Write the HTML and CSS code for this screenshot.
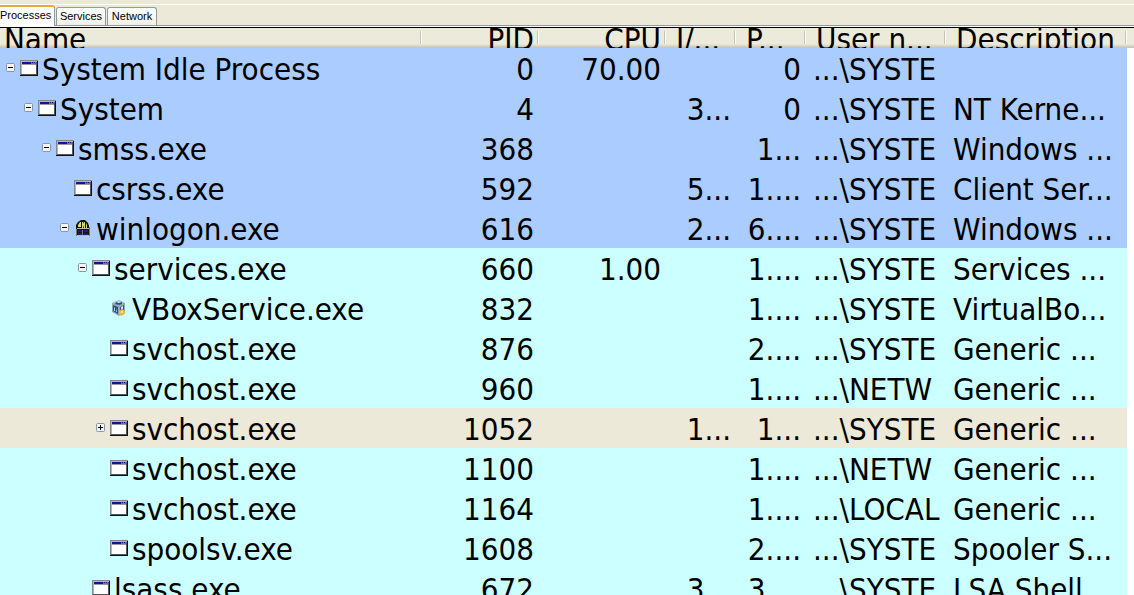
FILE: index.html
```
<!DOCTYPE html>
<html lang="en">
<head>
  <meta charset="UTF-8">
  <title>Processes</title>
  <link rel="stylesheet" href="styles.css">
</head>
<body>
<svg class="sprites" aria-hidden="true">
  <symbol id="icon-window" viewBox="0 0 18 16">
    <path fill="#85858c" d="M0 0h18v16H0z"/>
    <path fill="#b4b4bc" d="M1 1h16v14H1z"/>
    <path fill="#fff" d="M2 5h14v9H2z"/>
    <path fill="#15159a" d="M2 2h9v2H2z"/>
    <path fill="#6a6ac0" d="M11 2h5v2h-5z"/>
    <path fill="#15158a" d="M12 2h1v1h-1zM14 2h1v1h-1z"/>
    <path fill="#9a9aa4" d="M2 4h14v1H2z"/>
    <path fill="#111" d="M0 15h18v1H0zM17 1h1v15h-1z"/>
    <path fill="#55555c" d="M1 14h16v1H1zM16 2h1v12h-1z"/>
  </symbol>
  <symbol id="icon-logon" viewBox="0 0 18 18">
    <path fill="#111" d="M2 17V6l2-3 3-2h4l3 3 1 3v10z"/>
    <path fill="#e0d878" d="M4 6l2-3h1v5H4zM8 3h1l1 2V3h1v6h-1L9 6v3H8zM12 4l1 2v3h-1z"/>
    <path fill="#b9b9c6" d="M3 9h12v1H3zM3 16h12v1H3z"/>
    <path fill="#181894" d="M4 11h4v2H4zM10 11h4v2h-4zM4 14h4v2H4zM10 14h4v2h-4z"/>
    <path fill="#77776a" d="M2 10h1v7H2zM15 8h1v9h-1zM8 11h1v5H8z"/>
  </symbol>
  <symbol id="icon-vbox" viewBox="0 0 18 18">
    <path fill="#8fa9bc" d="M2 4l7-3 6 3v9l-6 4-7-4z"/>
    <path fill="#d8e8f0" d="M4 4l5-2 4 2-4 2z"/>
    <path fill="#2c4f78" d="M6 3l3 1 3-1v2L9 6 5 5zM3 6l5 2v7l-5-3z"/>
    <path fill="#b4d2e4" d="M4 8l1 1v3H4zM6 9l1 4H6z"/>
    <path fill="#315a80" d="M10 8l4-2v5l-4 2z"/>
    <path fill="#d4e4ec" d="M11 8l2-1v3l-2 1z"/>
    <path fill="#e9b94e" d="M9 12l3-2 3 2v3l-4 2-2-2z"/>
    <path fill="#f8e4a0" d="M11 12h2v2h-2z"/>
  </symbol>
  <symbol id="icon-minus" viewBox="0 0 9 9">
    <rect x=".5" y=".5" width="8" height="8" rx="1" fill="#f4f3ee" stroke="#8297ae"/>
    <path fill="#000" d="M2 4h5v1H2z"/>
  </symbol>
  <symbol id="icon-plus" viewBox="0 0 9 9">
    <rect x=".5" y=".5" width="8" height="8" rx="1" fill="#f4f3ee" stroke="#8297ae"/>
    <path fill="#000" d="M2 4h5v1H2zM4 2h1v5H4z"/>
  </symbol>
</svg>

<div class="window">
  <div class="toolbar"></div>
  <div class="tabs" role="tablist">
    <button class="tab tab--active" role="tab" aria-selected="true">Processes</button>
    <button class="tab" role="tab" aria-selected="false">Services</button>
    <button class="tab" role="tab" aria-selected="false">Network</button>
  </div>

  <div class="list">
    <table class="processes">
      <colgroup>
        <col>
        <col class="col-pid">
        <col class="col-cpu">
        <col class="col-io">
        <col class="col-private">
        <col class="col-user">
        <col class="col-description">
        <col class="col-rest">
      </colgroup>
      <thead>
        <tr>
          <th class="name"><div>Name</div></th>
          <th class="num"><div>PID</div></th>
          <th class="num"><div>CPU</div></th>
          <th><div>I/...</div></th>
          <th><div>P...</div></th>
          <th><div>User n...</div></th>
          <th><div>Description</div></th>
          <th class="rest"></th>
        </tr>
      </thead>
      <tbody>
        <tr class="own">
          <td><div class="node level-0"><button class="toggle" aria-label="Collapse"><svg><use href="#icon-minus"/></svg></button><svg class="icon"><use href="#icon-window"/></svg>System Idle Process</div></td>
          <td class="num">0</td><td class="num">70.00</td><td class="num"></td><td class="num">0</td><td><div class="clip">...\SYSTE</div></td><td></td><td class="rest"></td>
        </tr>
        <tr class="own">
          <td><div class="node level-1"><button class="toggle" aria-label="Collapse"><svg><use href="#icon-minus"/></svg></button><svg class="icon"><use href="#icon-window"/></svg>System</div></td>
          <td class="num">4</td><td class="num"></td><td class="num">3...</td><td class="num">0</td><td><div class="clip">...\SYSTE</div></td><td>NT Kerne...</td><td class="rest"></td>
        </tr>
        <tr class="own">
          <td><div class="node level-2"><button class="toggle" aria-label="Collapse"><svg><use href="#icon-minus"/></svg></button><svg class="icon"><use href="#icon-window"/></svg>smss.exe</div></td>
          <td class="num">368</td><td class="num"></td><td class="num"></td><td class="num">1...</td><td><div class="clip">...\SYSTE</div></td><td>Windows ...</td><td class="rest"></td>
        </tr>
        <tr class="own">
          <td><div class="node level-3"><span class="toggle"></span><svg class="icon"><use href="#icon-window"/></svg>csrss.exe</div></td>
          <td class="num">592</td><td class="num"></td><td class="num">5...</td><td class="num">1....</td><td><div class="clip">...\SYSTE</div></td><td>Client Ser...</td><td class="rest"></td>
        </tr>
        <tr class="own">
          <td><div class="node level-3"><button class="toggle" aria-label="Collapse"><svg><use href="#icon-minus"/></svg></button><svg class="icon icon--tall"><use href="#icon-logon"/></svg>winlogon.exe</div></td>
          <td class="num">616</td><td class="num"></td><td class="num">2...</td><td class="num">6....</td><td><div class="clip">...\SYSTE</div></td><td>Windows ...</td><td class="rest"></td>
        </tr>
        <tr class="service">
          <td><div class="node level-4"><button class="toggle" aria-label="Collapse"><svg><use href="#icon-minus"/></svg></button><svg class="icon"><use href="#icon-window"/></svg>services.exe</div></td>
          <td class="num">660</td><td class="num">1.00</td><td class="num"></td><td class="num">1....</td><td><div class="clip">...\SYSTE</div></td><td>Services ...</td><td class="rest"></td>
        </tr>
        <tr class="service">
          <td><div class="node level-5"><span class="toggle"></span><svg class="icon icon--tall"><use href="#icon-vbox"/></svg>VBoxService.exe</div></td>
          <td class="num">832</td><td class="num"></td><td class="num"></td><td class="num">1....</td><td><div class="clip">...\SYSTE</div></td><td>VirtualBo...</td><td class="rest"></td>
        </tr>
        <tr class="service">
          <td><div class="node level-5"><span class="toggle"></span><svg class="icon"><use href="#icon-window"/></svg>svchost.exe</div></td>
          <td class="num">876</td><td class="num"></td><td class="num"></td><td class="num">2....</td><td><div class="clip">...\SYSTE</div></td><td>Generic ...</td><td class="rest"></td>
        </tr>
        <tr class="service">
          <td><div class="node level-5"><span class="toggle"></span><svg class="icon"><use href="#icon-window"/></svg>svchost.exe</div></td>
          <td class="num">960</td><td class="num"></td><td class="num"></td><td class="num">1....</td><td><div class="clip">...\NETW</div></td><td>Generic ...</td><td class="rest"></td>
        </tr>
        <tr class="selected">
          <td><div class="node level-5"><button class="toggle" aria-label="Expand"><svg><use href="#icon-plus"/></svg></button><svg class="icon"><use href="#icon-window"/></svg>svchost.exe</div></td>
          <td class="num">1052</td><td class="num"></td><td class="num">1...</td><td class="num">1...</td><td><div class="clip">...\SYSTE</div></td><td>Generic ...</td><td class="rest"></td>
        </tr>
        <tr class="service">
          <td><div class="node level-5"><span class="toggle"></span><svg class="icon"><use href="#icon-window"/></svg>svchost.exe</div></td>
          <td class="num">1100</td><td class="num"></td><td class="num"></td><td class="num">1....</td><td><div class="clip">...\NETW</div></td><td>Generic ...</td><td class="rest"></td>
        </tr>
        <tr class="service">
          <td><div class="node level-5"><span class="toggle"></span><svg class="icon"><use href="#icon-window"/></svg>svchost.exe</div></td>
          <td class="num">1164</td><td class="num"></td><td class="num"></td><td class="num">1....</td><td><div class="clip">...\LOCAL</div></td><td>Generic ...</td><td class="rest"></td>
        </tr>
        <tr class="service">
          <td><div class="node level-5"><span class="toggle"></span><svg class="icon"><use href="#icon-window"/></svg>spoolsv.exe</div></td>
          <td class="num">1608</td><td class="num"></td><td class="num"></td><td class="num">2....</td><td><div class="clip">...\SYSTE</div></td><td>Spooler S...</td><td class="rest"></td>
        </tr>
        <tr class="service">
          <td><div class="node level-4"><span class="toggle"></span><svg class="icon"><use href="#icon-window"/></svg>lsass.exe</div></td>
          <td class="num">672</td><td class="num"></td><td class="num">3...</td><td class="num">3....</td><td><div class="clip">...\SYSTE</div></td><td>LSA Shell...</td><td class="rest"></td>
        </tr>
      </tbody>
    </table>
  </div>
</div>
</body>
</html>
```
FILE: styles.css
```
body {
  margin: 0;
  background: white;
  color: black;
  font-family: "DejaVu Sans Condensed", "DejaVu Sans", sans-serif;
  overflow: hidden;
}
.sprites {
  display: none;
}
.window {
  display: flex;
  flex-direction: column;
  height: 100vh;
  overflow: hidden;
}
.toolbar {
  flex: none;
  height: 4px;
  background: #ece9d8;
  border-bottom: 1px solid white;
}

/* tabs */
.tabs {
  flex: none;
  display: flex;
  align-items: flex-end;
  gap: 1px;
  height: 20px;
  background: #ece9d8;
  border-bottom: 1px solid #919b9c;
}
.tab {
  box-sizing: border-box;
  width: 50px;
  height: 18px;
  padding: 0;
  border: 1px solid #919b9c;
  border-bottom: none;
  border-radius: 3px 3px 0 0;
  background: linear-gradient(white, #f1f0e8);
  color: black;
  font-family: "Liberation Sans", Arial, sans-serif;
  font-size: 11px;
  line-height: 17px;
}
.tab--active {
  width: 55px;
  height: 21px;
  margin-bottom: -1px;
  padding: 0 6px 2px 0;
  border-top: 2px solid #f0a63a;
  border-left: none;
  border-radius: 0 3px 0 0;
  background: white;
}

/* process list */
.list {
  flex: 1;
  min-height: 0;
  margin-top: 1px;
  border-top: 1px solid black;
  overflow: hidden;
}
.processes {
  width: 100%;
  table-layout: fixed;
  border-collapse: collapse;
  font-size: 31px;
  white-space: nowrap;
}
.col-pid {
  width: 117px;
}
.col-cpu {
  width: 127px;
}
.col-io,
.col-private {
  width: 70px;
}
.col-user {
  width: 140px;
}
.col-description {
  width: 181px;
}
.col-rest {
  width: 7px;
}
.processes th {
  height: 20px;
  padding: 0;
  background:
    linear-gradient(#c5c2b4, #c5c2b4) right 1px top 3px / 1px 13px no-repeat,
    linear-gradient(white, white) right 0 top 3px / 1px 13px no-repeat,
    linear-gradient(#ebeadb 16px, #d8d4c4 18px, #c4c3bb 20px);
  font-weight: normal;
  text-align: left;
  vertical-align: top;
}
.processes th.rest {
  background: linear-gradient(#ebeadb 16px, #d8d4c4 18px, #c4c3bb 20px);
}
.processes th div {
  height: 20px;
  padding-left: 10px;
  line-height: 22px;
  overflow: hidden;
}
.processes th.name div {
  padding-left: 4px;
}
.processes th.num div {
  padding: 0 5px 0 0;
  text-align: right;
}
.processes td {
  height: 38px;
  padding: 2px 5px 0 7px;
  line-height: 38px;
}
.processes td.num {
  padding-left: 0;
  text-align: right;
}
.processes td:first-child {
  padding-left: 0;
}
.clip {
  overflow: hidden;
}
.own {
  background: #aaccff;
}
.service {
  background: #ccffff;
}
.selected {
  background: #ece9d8;
}
.processes td.rest {
  padding: 0;
  background: white;
}

/* tree */
.node {
  display: flex;
  align-items: center;
  height: 38px;
}
.level-0 { padding-left: 6px; }
.level-1 { padding-left: 24px; }
.level-2 { padding-left: 42px; }
.level-3 { padding-left: 60px; }
.level-4 { padding-left: 78px; }
.level-5 { padding-left: 96px; }
.toggle {
  flex: none;
  width: 9px;
  height: 9px;
  margin: 0 5px 3px 0;
  padding: 0;
  border: none;
  background: none;
}
.toggle svg {
  display: block;
  width: 9px;
  height: 9px;
}
.icon {
  flex: none;
  width: 18px;
  height: 16px;
  margin: 0 4px 3px 0;
}
.icon--tall {
  height: 18px;
}
```
